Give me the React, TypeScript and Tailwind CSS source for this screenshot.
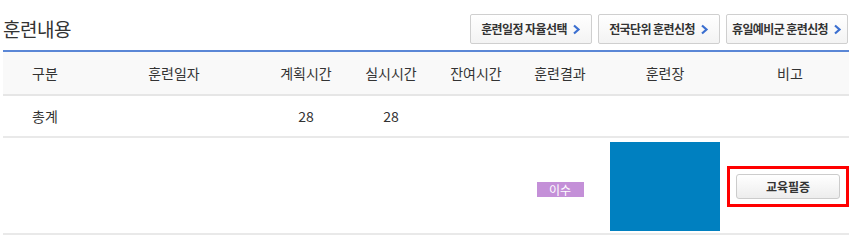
import React from 'react';

const font = { fontFamily: '"Noto Sans CJK KR", "Noto Sans", sans-serif' };

function LinkButton({ label }: { label: string }) {
  return (
    <button
      type="button"
      className="flex items-center justify-center gap-1 w-[122px] h-[30px] border border-[#cfcfcf] rounded-[2px] bg-gradient-to-b from-white to-[#f3f3f3] text-[12px] font-bold text-[#333] tracking-[-0.6px]"
    >
      {label}
      <svg width="9" height="11" viewBox="0 0 9 11" className="ml-[1px]">
        <path d="M2 1.5 L6.5 5.5 L2 9.5" stroke="#3b6fd0" strokeWidth="2.2" fill="none" />
      </svg>
    </button>
  );
}

const columns = [
  { label: '구분', w: 'w-[84px]' },
  { label: '훈련일자', w: 'w-[174px]' },
  { label: '계획시간', w: 'w-[90px]' },
  { label: '실시시간', w: 'w-[80px]' },
  { label: '잔여시간', w: 'w-[90px]' },
  { label: '훈련결과', w: 'w-[78px]' },
  { label: '훈련장', w: 'w-[132px]' },
  { label: '비고', w: 'w-[118px]' },
];

export default function App() {
  return (
    <div className="w-[853px] h-[240px] bg-white px-[3px] overflow-hidden" style={font}>
      {/* Title + links */}
      <div className="flex items-center justify-between h-[50px] pt-[6px]">
        <h2 className="text-[19px] text-[#333] tracking-[-0.5px] leading-none pt-[1px]">훈련내용</h2>
        <div className="flex gap-[6px] pr-[2px] pt-[2px]">
          <LinkButton label="훈련일정 자율선택" />
          <LinkButton label="전국단위 훈련신청" />
          <LinkButton label="휴일예비군 훈련신청" />
        </div>
      </div>

      <table className="w-[846px] table-fixed border-collapse border-t-2 border-[#5b87d6] text-[14px] text-[#333]">
        <colgroup>
          {columns.map((c) => (
            <col key={c.label} className={c.w} />
          ))}
        </colgroup>
        <thead>
          <tr className="h-[44px] bg-[#f9f9f9] border-b-2 border-[#e6e6e6]">
            {columns.map((c) => (
              <th key={c.label} className="font-normal text-center p-0">
                {c.label}
              </th>
            ))}
          </tr>
        </thead>
        <tbody>
          <tr className="h-[42px] border-b-2 border-[#e9e9e9]">
            <td className="text-center">총계</td>
            <td />
            <td className="text-center">28</td>
            <td className="text-center">28</td>
            <td />
            <td />
            <td />
            <td />
          </tr>
          <tr className="h-[97px] border-b-2 border-[#e9e9e9]">
            <td />
            <td />
            <td />
            <td />
            <td />
            <td className="text-center">
              <span className="inline-block w-[47px] h-[15px] leading-[15px] bg-[#c490d8] text-white text-[12px] mt-[10px]">
                이수
              </span>
            </td>
            <td className="text-center p-0">
              <div className="w-[110px] h-[89px] bg-[#0080c0] mx-auto mt-[2px]" />
            </td>
            <td className="text-center p-0">
              <div className="inline-block border-[3px] border-[#ff0000] px-[6px] py-[5px] -ml-[4px] mt-[2px]">
                <button
                  type="button"
                  className="w-[104px] h-[25px] border border-[#cccccc] rounded-[3px] bg-gradient-to-b from-white to-[#ededed] text-[12px] font-bold text-[#333]"
                >
                  교육필증
                </button>
              </div>
            </td>
          </tr>
        </tbody>
      </table>
    </div>
  );
}
